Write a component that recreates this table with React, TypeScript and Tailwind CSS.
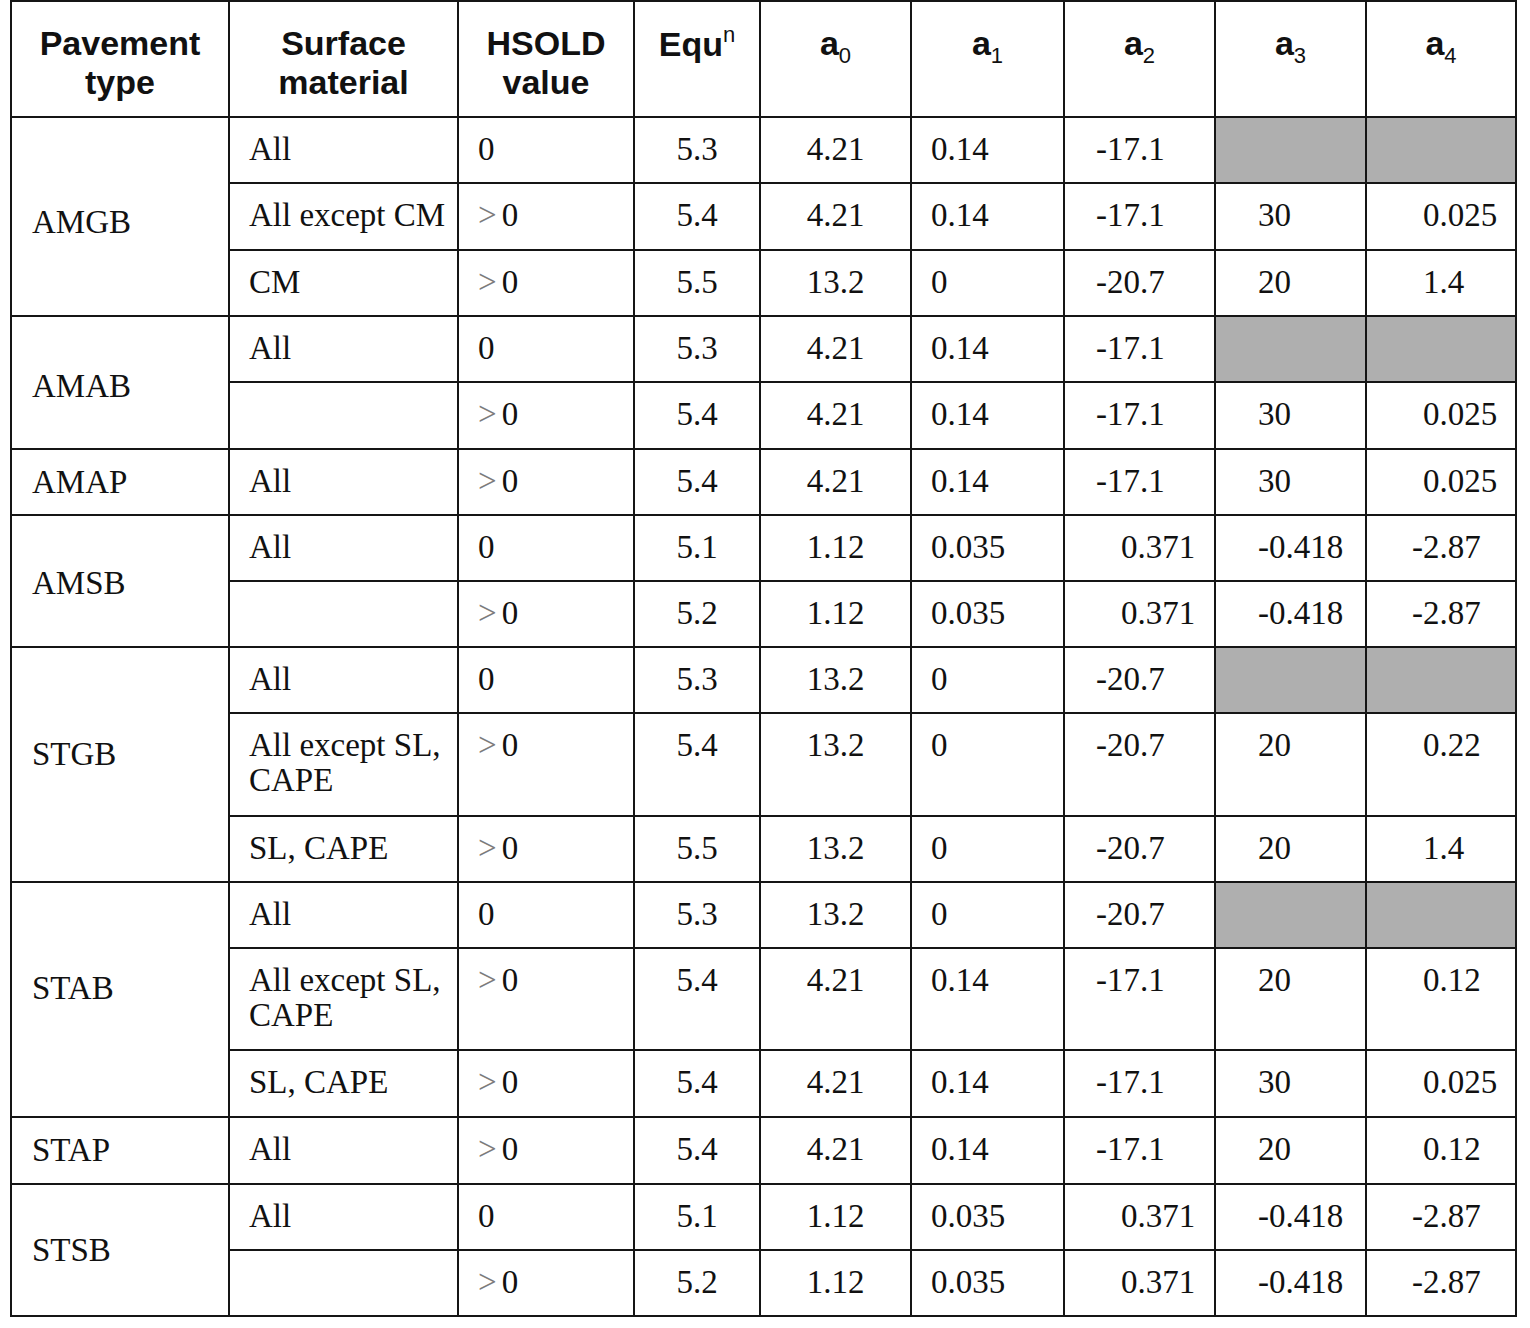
import React from "react";

type Row = {
  group?: { label: string; span: number; cls: string };
  surface: string[];
  hsold: "0" | ">0";
  equ: string;
  a0: string;
  a1: string;
  a2: string;
  a3: string | null;
  a4: string | null;
  h: string;
};

const rows: Row[] = [
  { group: { label: "AMGB", span: 3, cls: "pt-[12px]" }, surface: ["All"], hsold: "0", equ: "5.3", a0: "4.21", a1: "0.14", a2: "-17.1", a3: null, a4: null, h: "h-[66px]" },
  { surface: ["All except CM"], hsold: ">0", equ: "5.4", a0: "4.21", a1: "0.14", a2: "-17.1", a3: "30", a4: "0.025", h: "h-[67px]" },
  { surface: ["CM"], hsold: ">0", equ: "5.5", a0: "13.2", a1: "0", a2: "-20.7", a3: "20", a4: "1.4", h: "h-[66px]" },
  { group: { label: "AMAB", span: 2, cls: "pt-[8px]" }, surface: ["All"], hsold: "0", equ: "5.3", a0: "4.21", a1: "0.14", a2: "-17.1", a3: null, a4: null, h: "h-[66px]" },
  { surface: [], hsold: ">0", equ: "5.4", a0: "4.21", a1: "0.14", a2: "-17.1", a3: "30", a4: "0.025", h: "h-[67px]" },
  { group: { label: "AMAP", span: 1, cls: "pt-[0px]" }, surface: ["All"], hsold: ">0", equ: "5.4", a0: "4.21", a1: "0.14", a2: "-17.1", a3: "30", a4: "0.025", h: "h-[66px]" },
  { group: { label: "AMSB", span: 2, cls: "pt-[4px]" }, surface: ["All"], hsold: "0", equ: "5.1", a0: "1.12", a1: "0.035", a2: "0.371", a3: "-0.418", a4: "-2.87", h: "h-[66px]" },
  { surface: [], hsold: ">0", equ: "5.2", a0: "1.12", a1: "0.035", a2: "0.371", a3: "-0.418", a4: "-2.87", h: "h-[66px]" },
  { group: { label: "STGB", span: 3, cls: "pb-[20px]" }, surface: ["All"], hsold: "0", equ: "5.3", a0: "13.2", a1: "0", a2: "-20.7", a3: null, a4: null, h: "h-[66px]" },
  { surface: ["All except SL,", "CAPE"], hsold: ">0", equ: "5.4", a0: "13.2", a1: "0", a2: "-20.7", a3: "20", a4: "0.22", h: "h-[103px]" },
  { surface: ["SL, CAPE"], hsold: ">0", equ: "5.5", a0: "13.2", a1: "0", a2: "-20.7", a3: "20", a4: "1.4", h: "h-[66px]" },
  { group: { label: "STAB", span: 3, cls: "pb-[22px]" }, surface: ["All"], hsold: "0", equ: "5.3", a0: "13.2", a1: "0", a2: "-20.7", a3: null, a4: null, h: "h-[66px]" },
  { surface: ["All except SL,", "CAPE"], hsold: ">0", equ: "5.4", a0: "4.21", a1: "0.14", a2: "-17.1", a3: "20", a4: "0.12", h: "h-[102px]" },
  { surface: ["SL, CAPE"], hsold: ">0", equ: "5.4", a0: "4.21", a1: "0.14", a2: "-17.1", a3: "30", a4: "0.025", h: "h-[67px]" },
  { group: { label: "STAP", span: 1, cls: "pt-[0px]" }, surface: ["All"], hsold: ">0", equ: "5.4", a0: "4.21", a1: "0.14", a2: "-17.1", a3: "20", a4: "0.12", h: "h-[67px]" },
  { group: { label: "STSB", span: 2, cls: "pt-[0px]" }, surface: ["All"], hsold: "0", equ: "5.1", a0: "1.12", a1: "0.035", a2: "0.371", a3: "-0.418", a4: "-2.87", h: "h-[66px]" },
  { surface: [], hsold: ">0", equ: "5.2", a0: "1.12", a1: "0.035", a2: "0.371", a3: "-0.418", a4: "-2.87", h: "h-[66px]" },
];

const bd = "border-2 border-[#151515]";
const cellTop = `${bd} align-top pt-[14px] pb-0`;

function Hsold({ v }: { v: "0" | ">0" }) {
  if (v === "0") return <>0</>;
  return (
    <>
      <span className="text-[#7c7c7c]">&gt;</span>
      <span className="ml-[5px]">0</span>
    </>
  );
}

function Th({ children }: { children: React.ReactNode }) {
  return (
    <th
      className={`${bd} align-top text-center pt-[22px] px-0 font-bold text-[34px] leading-[39px] font-['Liberation_Sans',Arial,sans-serif]`}
    >
      {children}
    </th>
  );
}

function ASub({ n }: { n: string }) {
  return (
    <>
      a
      <span className="font-normal text-[22px] leading-none align-[-8px]">{n}</span>
    </>
  );
}

export default function App() {
  return (
    <div className="min-h-[1328px] w-[1530px] bg-white text-[#111] font-['Liberation_Serif','Times_New_Roman',serif]">
      <table className="table-fixed border-collapse ml-[10px] w-[1507px]">
        <colgroup>
          <col className="w-[218px]" />
          <col className="w-[229px]" />
          <col className="w-[176px]" />
          <col className="w-[126px]" />
          <col className="w-[151px]" />
          <col className="w-[153px]" />
          <col className="w-[151px]" />
          <col className="w-[151px]" />
          <col className="w-[150px]" />
        </colgroup>
        <thead>
          <tr className="h-[116px]">
            <Th>
              Pavement
              <br />
              type
            </Th>
            <Th>
              Surface
              <br />
              material
            </Th>
            <Th>
              HSOLD
              <br />
              value
            </Th>
            <Th>
              Equ
              <span className="font-normal text-[22px] leading-none align-[14px]">n</span>
            </Th>
            <Th>
              <ASub n="0" />
            </Th>
            <Th>
              <ASub n="1" />
            </Th>
            <Th>
              <ASub n="2" />
            </Th>
            <Th>
              <ASub n="3" />
            </Th>
            <Th>
              <ASub n="4" />
            </Th>
          </tr>
        </thead>
        <tbody className="text-[33px] leading-[35px]">
          {rows.map((r, i) => (
            <tr key={i} className={r.h}>
              {r.group && (
                <td
                  rowSpan={r.group.span}
                  className={`${bd} align-middle pl-[20px] ${r.group.cls}`}
                >
                  {r.group.label}
                </td>
              )}
              <td className={`${cellTop} pl-[19px] pr-0`}>
                {r.surface.map((s, j) => (
                  <div key={j}>{s}</div>
                ))}
              </td>
              <td className={`${cellTop} pl-[19px]`}>
                <Hsold v={r.hsold} />
              </td>
              <td className={`${cellTop} text-center`}>{r.equ}</td>
              <td className={`${cellTop} text-center`}>{r.a0}</td>
              <td className={`${cellTop} pl-[19px]`}>{r.a1}</td>
              <td className={`${cellTop} ${r.a2.startsWith("-") ? "pl-[31px]" : "pl-[56px]"}`}>{r.a2}</td>
              {r.a3 === null ? (
                <td className={`${bd} bg-[#afafaf]`} />
              ) : (
                <td className={`${cellTop} pl-[42px]`}>{r.a3}</td>
              )}
              {r.a4 === null ? (
                <td className={`${bd} bg-[#afafaf]`} />
              ) : (
                <td className={`${cellTop} ${r.a4.startsWith("-") ? "pl-[45px]" : "pl-[56px]"}`}>{r.a4}</td>
              )}
            </tr>
          ))}
        </tbody>
      </table>
    </div>
  );
}
